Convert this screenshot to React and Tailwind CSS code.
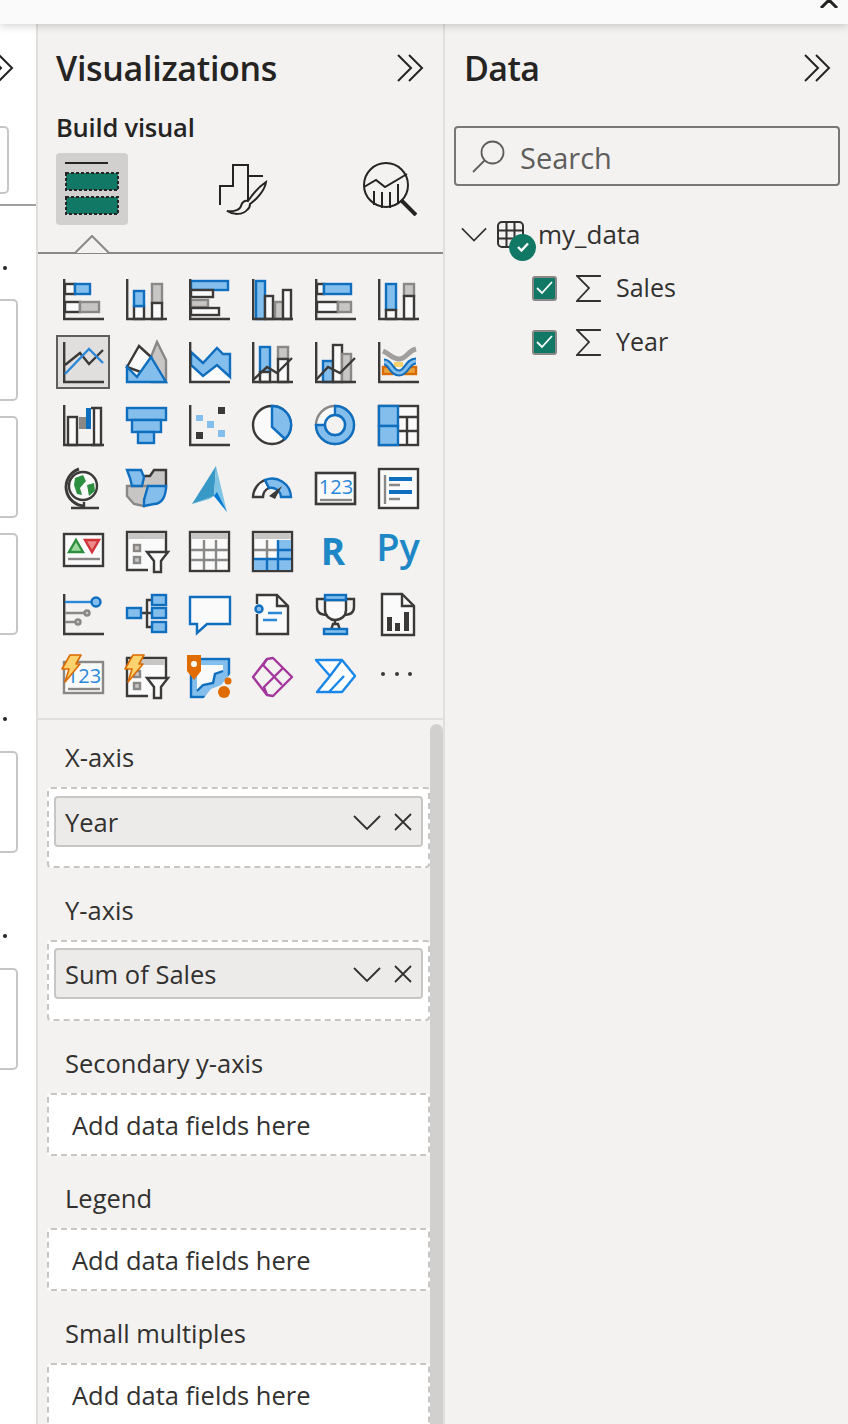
import React from 'react';

const DK = '#3b3a39';
const BL = '#106ebe';
const LB = '#83beec';
const GR = '#8a8886';
const LG = '#c8c6c4';
const WH = '#fafafa';
const SW = 2.4;

const Axis = () => <path d="M1.2 0V40H41" fill="none" stroke={DK} strokeWidth="2.4" />;
const Blue = (p) => <rect fill={LB} stroke={BL} strokeWidth={SW} {...p} />;
const White = (p) => <rect fill={WH} stroke={DK} strokeWidth={SW} {...p} />;
const Gray = (p) => <rect fill={LG} stroke={GR} strokeWidth={SW} {...p} />;
const Line = ({ d, c = DK, w = SW }) => <path d={d} fill="none" stroke={c} strokeWidth={w} />;

const Bolt = () => (
  <path d="M7 -2H18L13 7H17L2 25L6 12H-1Z" fill="#fcd26f" stroke="#d96b00" strokeWidth="1.6" strokeLinejoin="round" />
);

const CardBody = () => (
  <>
    <rect x="1" y="5" width="39" height="31" fill={WH} stroke={GR} strokeWidth={SW} />
    <text x="21" y="26" textAnchor="middle" fontFamily="'Open Sans', sans-serif" fontSize="20" fill="#2b88d8">123</text>
    <path d="M5 32H37" stroke={GR} strokeWidth={SW} />
  </>
);

const SlicerBody = () => (
  <>
    <path d="M22 39H1V1H40V20" fill={WH} stroke={DK} strokeWidth={SW} />
    <rect x="2" y="2" width="37" height="6" fill={LG} />
    <rect x="8" y="14" width="6" height="6" fill={LG} stroke={GR} strokeWidth={SW} />
    <rect x="8" y="26" width="6" height="6" fill={LG} stroke={GR} strokeWidth={SW} />
    <path d="M21 21H42L35 30V41H28V30Z" fill={WH} stroke={DK} strokeWidth={SW} />
  </>
);

const ICONS = [
  <><White x="2" y="5" width="10" height="10" /><Blue x="12" y="5" width="15" height="10" /><White x="2" y="23" width="15" height="10" /><Gray x="17" y="23" width="19" height="10" /><Axis /></>,
  <><White x="8" y="27" width="10" height="13" /><Blue x="8" y="12" width="10" height="15" /><Gray x="26" y="5" width="10" height="19" /><White x="26" y="24" width="10" height="16" /><Axis /></>,
  <><Blue x="2" y="2" width="37" height="9" /><White x="2" y="11" width="22" height="7" /><Gray x="2" y="21" width="17" height="7" /><White x="2" y="29" width="28" height="7" /><Axis /></>,
  <><Blue x="4" y="2" width="9" height="38" /><White x="13" y="17" width="8" height="23" /><Gray x="23" y="23" width="8" height="17" /><White x="31" y="11" width="8" height="29" /><Axis /></>,
  <><White x="2" y="5" width="7" height="10" /><Blue x="9" y="5" width="27" height="10" /><White x="2" y="23" width="21" height="10" /><Gray x="23" y="23" width="13" height="10" /><Axis /></>,
  <><Blue x="8" y="5" width="10" height="26" /><White x="8" y="31" width="10" height="9" /><Gray x="26" y="5" width="10" height="12" /><White x="26" y="17" width="10" height="23" /><Axis /></>,

  <><Axis /><Line d="M2 23L17 11L26 22L40 8" /><Line d="M2 32L26 7L40 21" c="#2b88d8" /></>,
  <><path d="M25 15L31 0L40 18V40H26Z" fill={LG} stroke={GR} strokeWidth={SW} /><path d="M1 25L13 4L25 15L20 32Z" fill={WH} stroke={DK} strokeWidth={SW} /><path d="M1 25L11 35L25 15L40 40H1Z" fill={LB} stroke={BL} strokeWidth={SW} /></>,
  <><path d="M2 23L14 34L28 23L41 35V40H2Z" fill={WH} /><path d="M2 10L14 21L28 6L34 12H41V35L28 23L14 34L2 23Z" fill={LB} stroke={BL} strokeWidth={SW} /><Axis /></>,
  <><Blue x="8" y="5" width="10" height="25" /><White x="8" y="30" width="10" height="10" /><Gray x="26" y="5" width="10" height="12" /><White x="26" y="17" width="10" height="23" /><Axis /><Line d="M1 38L15 25L25 31L40 16" /></>,
  <><Blue x="8" y="19" width="10" height="21" /><White x="18" y="3" width="9" height="37" /><Gray x="27" y="12" width="9" height="28" /><Axis /><Line d="M1 38L13 25L25 31L40 16" /></>,
  <><Axis /><Line d="M5 9C12 12 14 17 21 17C28 17 30 9 38 7" c="#a19f9d" w="5" /><rect x="5" y="25" width="9" height="7" fill="#e8a33d" stroke="#d96b00" strokeWidth={SW} /><rect x="27" y="25" width="11" height="7" fill="#e8a33d" stroke="#d96b00" strokeWidth={SW} /><rect x="16" y="20" width="9" height="5" fill="#fcd26f" /><Line d="M6 20C13 20 13 31 21 31C29 31 29 19 38 19" c={BL} w="7" /><Line d="M6 20C13 20 13 31 21 31C29 31 29 19 38 19" c={LB} w="3" /></>,

  <><White x="5" y="12" width="9" height="28" /><rect x="16" y="12" width="7" height="12" fill={GR} /><rect x="23" y="3" width="5" height="21" fill={BL} /><path d="M28 3H38V40H28" fill={WH} stroke={DK} strokeWidth={SW} /><path d="M31 3V40" stroke={DK} strokeWidth={SW} /><Axis /></>,
  <><Blue x="1" y="3" width="39" height="12" /><Blue x="6" y="15" width="29" height="12" /><Blue x="12" y="27" width="16" height="11" /></>,
  <><Axis /><rect x="7" y="10" width="7" height="6" fill={LB} /><rect x="29" y="2" width="7" height="7" fill={DK} /><rect x="18" y="16" width="7" height="7" fill={LB} /><rect x="29" y="25" width="7" height="7" fill={LB} /><rect x="7" y="27" width="7" height="7" fill={DK} /></>,
  <><circle cx="20" cy="20" r="19" fill={WH} stroke={DK} strokeWidth={SW} /><path d="M20 1A19 19 0 0 1 33 34L20 22Z" fill={LB} stroke={BL} strokeWidth={SW} /></>,
  <><circle cx="20" cy="20" r="19" fill={WH} stroke={GR} strokeWidth={SW} /><path d="M20 1A19 19 0 1 1 1 20H10A10 10 0 1 0 20 10Z" fill={LB} stroke={BL} strokeWidth={SW} /><circle cx="20" cy="20" r="10" fill="#f3f2f1" stroke={BL} strokeWidth={SW} /></>,
  <><rect x="1" y="1" width="39" height="39" fill={WH} stroke={DK} strokeWidth={SW} /><Line d="M20 12H40M29 12V40M20 26H40" /><Blue x="1" y="1" width="19" height="20" /><Blue x="1" y="21" width="19" height="19" /></>,

  <><circle cx="20" cy="18" r="14" fill={WH} stroke={DK} strokeWidth={SW} /><path d="M12 10L20 7L23 13L17 20L19 27L14 26L11 17Z" fill="#2d8f3f" /><path d="M24 17L31 15L32 23L26 28Z" fill="#2d8f3f" /><path d="M16 1A19 19 0 0 0 22 38" fill="none" stroke={DK} strokeWidth="3" /><path d="M8 40H36M21 34V40" stroke={DK} strokeWidth={SW} /></>,
  <><path d="M15 8H24L28 2H40V20H15Z" fill={LG} stroke={DK} strokeWidth={SW} /><path d="M1 18H22L18 38L8 36L1 28Z" fill={LG} stroke={GR} strokeWidth={SW} /><path d="M1 2H15L18 9L16 18H6L4 10Z" fill={LB} stroke={BL} strokeWidth={SW} /><path d="M22 18H40C40 28 36 36 28 36L18 38L18 32Z" fill={LB} stroke={BL} strokeWidth={SW} /></>,
  <><path d="M27 -2L3 36L25 28Z" fill="#3999c6" /><path d="M27 -2L38 44L25 28Z" fill="#7fc4e3" /><path d="M25 28L38 44L28 24Z" fill="#0078d4" /><path d="M3 36L25 28L20 31Z" fill="#59b4d9" /></>,
  <><path d="M1 29A19 19 0 0 1 13 12L17 20A10 10 0 0 0 11 29Z" fill={WH} stroke={DK} strokeWidth={SW} /><path d="M13 12A19 19 0 0 1 39 29H29A10 10 0 0 0 17 20Z" fill={LB} stroke={BL} strokeWidth={SW} /><path d="M17 28L30 18L23 31Z" fill={DK} /></>,
  <><CardBody /><rect x="1" y="5" width="39" height="31" fill="none" stroke={DK} strokeWidth={SW} /></>,
  <><rect x="1" y="1" width="39" height="39" fill={WH} stroke={DK} strokeWidth={SW} /><path d="M7 7V36" stroke={GR} strokeWidth={SW} /><path d="M11 11H34M11 24H34" stroke={BL} strokeWidth="4" /><path d="M11 17H22M11 31H22" stroke={GR} strokeWidth={SW} /></>,

  <><rect x="1" y="3" width="39" height="32" fill={WH} stroke={DK} strokeWidth={SW} /><path d="M13 9L20 21H6Z" fill="#9fd89f" stroke="#2d8f3f" strokeWidth={SW} /><path d="M22 9H36L29 21Z" fill="#ee8a8a" stroke="#d13438" strokeWidth={SW} /><path d="M5 28H37" stroke={GR} strokeWidth={SW} /></>,
  <SlicerBody />,
  <><rect x="1" y="1" width="39" height="39" fill={WH} stroke={DK} strokeWidth={SW} /><rect x="2" y="2" width="37" height="6" fill={LG} /><path d="M15 9V39M27 9V39M2 19H39M2 29H39" stroke={GR} strokeWidth={SW} /></>,
  <><rect x="1" y="1" width="39" height="39" fill={WH} stroke={DK} strokeWidth={SW} /><rect x="2" y="2" width="37" height="6" fill={LG} /><rect x="26" y="9" width="13" height="30" fill={LB} /><rect x="2" y="28" width="37" height="11" fill={LB} /><path d="M15 9V28M2 19H26" stroke={GR} strokeWidth={SW} /><path d="M15 28V39M26 9V39M2 28H39M26 19H39" stroke={BL} strokeWidth={SW} /></>,
  <text x="18" y="34" textAnchor="middle" fontFamily="'Open Sans', sans-serif" fontWeight="700" fontSize="37" fill="#1e88c7">R</text>,
  <text x="20" y="30" textAnchor="middle" fontFamily="'Open Sans', sans-serif" fontWeight="600" fontSize="38" fill="#1e88c7">Py</text>,

  <><Axis /><path d="M2 8H28" stroke="#2b88d8" strokeWidth={SW} /><circle cx="33" cy="8" r="4.5" fill={LB} stroke={BL} strokeWidth={SW} /><path d="M2 19H21M2 28H12" stroke={GR} strokeWidth={SW} /><circle cx="24" cy="19" r="2.5" fill={LG} stroke={GR} strokeWidth={SW} /><circle cx="15" cy="28" r="2.5" fill={LG} stroke={GR} strokeWidth={SW} /></>,
  <><Line d="M15 19H26M26 6H21V33H26" /><Blue x="1" y="14" width="14" height="10" /><Blue x="26" y="1" width="14" height="10" /><Blue x="26" y="14" width="14" height="10" /><Blue x="26" y="28" width="14" height="10" /></>,
  <path d="M1 3H41V30H18L8 39V30H1Z" fill={WH} stroke={BL} strokeWidth={SW} />,
  <><path d="M5 10V1H25L36 12V40H5V20" fill={WH} stroke={DK} strokeWidth={SW} /><path d="M25 1V12H36" fill="none" stroke={DK} strokeWidth={SW} /><circle cx="7" cy="15" r="3.5" fill={LB} stroke={BL} strokeWidth={SW} /><path d="M16 19H30M11 26H25" stroke="#2b88d8" strokeWidth={SW} /></>,
  <><path d="M10 5H2V13C2 19 6 21 12 21M31 5H39V13C39 19 35 21 29 21" fill="none" stroke={DK} strokeWidth={SW} /><path d="M10 6H31V16C31 22 26 26 20 26C15 26 10 22 10 16Z" fill={WH} stroke={DK} strokeWidth={SW} /><path d="M20 26V30M16 36L18 30H23L25 36" fill="none" stroke={DK} strokeWidth={SW} /><Blue x="10" y="1" width="21" height="5" /><Blue x="9" y="35" width="23" height="5" /></>,
  <><path d="M4 0H24L36 12V41H4Z" fill={WH} stroke={DK} strokeWidth={SW} /><path d="M24 0V12H36" fill="none" stroke={DK} strokeWidth={SW} /><rect x="9" y="23" width="5" height="14" fill={DK} /><rect x="17" y="29" width="5" height="8" fill={DK} /><rect x="26" y="18" width="5" height="19" fill={DK} /></>,

  <><CardBody /><Bolt /></>,
  <><SlicerBody /><Bolt /></>,
  <><rect x="2" y="2" width="38" height="38" fill={LB} stroke={BL} strokeWidth={SW} /><path d="M8 8H34V14L26 17L24 26L14 28L8 34Z" fill={WH} /><path d="M34 14L26 17L24 26L14 28L8 34" fill="none" stroke={BL} strokeWidth={SW} /><path d="M42 16V42H14L22 32L32 28Z" fill="#f3f2f1" /><path d="M-2 -2H12V14L5 23L-2 14Z" fill="#e06c00" /><circle cx="5" cy="7" r="3" fill="#fff" /><circle cx="35" cy="35" r="6" fill="#e06c00" /><circle cx="39" cy="24" r="3.5" fill="#e06c00" /></>,
  <g fill="none" stroke="#a4379c" strokeWidth="2.4" strokeLinejoin="round"><path d="M1 20L15 2L21 1L40 20L21 39L15 38Z" /><path d="M15 2L11 8L30 28M31 11L12 30L15 38" /></g>,
  <g fill="#fff" stroke="#1a86e8" strokeWidth="2.4" strokeLinejoin="round"><path d="M1 3H27L40 19L27 35H2L15 19Z" /><path d="M27 3L15 19M14 35L29 19" fill="none" /></g>,
  <g fill={DK}><circle cx="5" cy="17" r="2" /><circle cx="19" cy="17" r="2" /><circle cx="32" cy="17" r="2" /></g>,
];

const Chevrons = () => (
  <svg width="30" height="30" viewBox="0 0 30 30" fill="none" stroke="#252423" strokeWidth="2">
    <path d="M2 2L15 15L2 28M13 2L26 15L13 28" />
  </svg>
);

const Chevron = ({ w = 28 }) => (
  <svg width={w} height="16" viewBox="0 0 28 16" fill="none" stroke="#323130" strokeWidth="1.8">
    <path d="M1 2L14 15L27 2" />
  </svg>
);

const Close = () => (
  <svg width="20" height="20" viewBox="0 0 20 20" fill="none" stroke="#323130" strokeWidth="1.8">
    <path d="M2 2L18 18M18 2L2 18" />
  </svg>
);

function Field({ name, className }) {
  return (
    <div className={`mx-[5px] h-[51px] flex items-center pl-[9px] pr-[8px] bg-[#edebe9] border-2 border-[#c8c6c4] rounded-[4px] ${className}`}>
      <span className="flex-1 text-[25.5px] text-[#323130] pt-[1px]">{name}</span>
      <Chevron />
      <span className="ml-[12px]"><Close /></span>
    </div>
  );
}

function Well({ label, className, children }) {
  return (
    <div className="mb-[14px]">
      <div className="h-[58px] flex items-center pb-[2px] pl-[27px] text-[25.5px] text-[#323130]">{label}</div>
      <div className={`ml-[9px] w-[383px] bg-white border-2 border-dashed border-[#c8c6c4] rounded-[4px] ${className}`}>
        {children || (
          <div className="h-full flex items-center pl-[23px] pt-[1px] text-[25.5px] text-[#323130]">Add data fields here</div>
        )}
      </div>
    </div>
  );
}

function SideBox({ className }) {
  return <div className={`w-[18px] border-y-2 border-r-2 border-[#c8c6c4] rounded-r-[5px] ${className}`} />;
}

function Dot({ className }) {
  return <div className={`ml-[3px] w-[4px] h-[4px] rounded-full bg-[#252423] ${className}`} />;
}

function LeftStub() {
  return (
    <div className="w-[36px] shrink-0 bg-white overflow-hidden relative">
      <div className="h-[88px] flex items-center -ml-[14px]"><Chevrons /></div>
      <div className="mt-[14px] w-[9px] h-[68px] border-y-2 border-r-2 border-[#c8c6c4] rounded-r-[5px]" />
      <div className="mt-[10px] h-[2px] bg-[#a19f9d]" />
      <Dot className="mt-[60px]" />
      <SideBox className="mt-[29px] h-[102px]" />
      <SideBox className="mt-[15px] h-[102px]" />
      <SideBox className="mt-[15px] h-[102px]" />
      <Dot className="mt-[82px]" />
      <SideBox className="mt-[30px] h-[102px]" />
      <Dot className="mt-[81px]" />
      <SideBox className="mt-[30px] h-[102px]" />
    </div>
  );
}

function BuildTabs() {
  return (
    <div className="relative h-[101px] mt-[9px] border-b-2 border-[#8a8886] flex">
      <div className="ml-[18px] w-[72px] h-[72px] rounded-[4px] bg-[#d2d0ce] flex items-center justify-center">
        <svg width="54" height="54" viewBox="0 0 54 54">
          <path d="M0 1H43" stroke="#252423" strokeWidth="2" />
          <rect x="1" y="11" width="52" height="17" fill="#117865" stroke="#252423" strokeWidth="2" strokeDasharray="3 2" />
          <rect x="1" y="35" width="52" height="17" fill="#117865" stroke="#252423" strokeWidth="2" strokeDasharray="3 2" />
        </svg>
      </div>
      <div className="ml-[91px] mt-[11px]">
        <svg width="50" height="52" viewBox="0 0 50 52" fill="none" stroke="#252423" strokeWidth="2">
          <path d="M1 41V22H14V1H29V36M29 12H44" />
          <path d="M47 18C41 22 33 31 29 37C26 36 23 38 22 42C21 46 14 48 8 47C14 51 24 51 28 46C31 44 31 41 31 40C38 35 46 26 47 18Z" fill="#f3f2f1" />
        </svg>
      </div>
      <div className="ml-[94px] mt-[9px]">
        <svg width="54" height="54" viewBox="0 0 54 54" fill="none" stroke="#252423" strokeWidth="2">
          <circle cx="23" cy="23" r="22" />
          <path d="M1 25L13 18L22 25L44 12M11 29V43M19 30V46M27 30V46M35 22V41" />
          <path d="M38 38L53 53" strokeWidth="4" />
        </svg>
      </div>
      {/* caret over the tab underline */}
      <svg className="absolute left-[36px] -bottom-[2px]" width="36" height="19" viewBox="0 0 36 19" fill="none">
        <path d="M0 18H1L18 1L35 18H36" fill="#f3f2f1" stroke="#8a8886" strokeWidth="2" />
      </svg>
    </div>
  );
}

function Visualizations() {
  return (
    <div className="w-[405px] shrink-0 relative overflow-hidden border-l-2 border-[#e1dfdd] box-content">
      <div className="h-[88px] flex items-center justify-between pl-[18px] pr-[17px]">
        <span className="text-[34px] font-semibold text-[#252423] tracking-[-0.3px]">Visualizations</span>
        <Chevrons />
      </div>
      <div className="h-[32px] flex items-center pl-[18px] pb-[2px] text-[25.5px] font-semibold text-[#252423] tracking-[-0.2px]">Build visual</div>
      <BuildTabs />
      <div className="pt-[25px] pb-[19px] pl-[25px] grid grid-cols-[repeat(6,42px)] gap-[21px] border-b-2 border-[#e1dfdd]">
        {ICONS.map((icon, i) => (
          <div key={i} className={i === 6 ? 'w-[42px] h-[42px] bg-[#e1dfdd] shadow-[-1px_-1px_0_4px_#e1dfdd,-1px_-1px_0_6px_#605e5c]' : 'w-[42px] h-[42px]'}>
            <svg width="42" height="42" viewBox="0 0 42 42" className="overflow-visible">{icon}</svg>
          </div>
        ))}
      </div>
      <div className="pt-[9px]">
        <Well label="X-axis" className="h-[81px]"><Field name="Year" className="mt-[7px]" /></Well>
        <Well label="Y-axis" className="h-[81px]"><Field name="Sum of Sales" className="mt-[6px]" /></Well>
        <Well label="Secondary y-axis" className="h-[63px]" />
        <Well label="Legend" className="h-[63px]" />
        <Well label="Small multiples" className="h-[63px]" />
      </div>
      {/* scrollbar thumb */}
      <div className="absolute top-[700px] left-[392px] bottom-0 w-[13px] rounded-t-full bg-[#d2d0ce]" />
    </div>
  );
}

function TreeRow({ name }) {
  return (
    <div className="h-[54px] flex items-center pl-[87px]">
      <div className="w-[25px] h-[25px] rounded-[3px] bg-[#117865] border-2 border-[#8a8886] flex items-center justify-center">
        <svg width="17" height="14" viewBox="0 0 17 14" fill="none" stroke="#fff" strokeWidth="1.8"><path d="M1 7L6 12L16 1" /></svg>
      </div>
      <svg className="ml-[19px]" width="25" height="27" viewBox="0 0 25 27" fill="none" stroke="#323130" strokeWidth="1.8">
        <path d="M24 2V1H1L13 13L1 26H24V25" />
      </svg>
      <span className="ml-[15px] text-[25px] text-[#323130]">{name}</span>
    </div>
  );
}

function DataPanel() {
  return (
    <div className="flex-1 border-l-2 border-[#e1dfdd]">
      <div className="h-[88px] flex items-center justify-between pl-[19px] pr-[15px]">
        <span className="text-[34px] font-semibold text-[#252423] tracking-[-0.6px]">Data</span>
        <Chevrons />
      </div>
      <div className="mt-[14px] ml-[9px] w-[386px] h-[60px] border-2 border-[#797775] rounded-[4px] flex items-center pl-[16px]">
        <svg width="33" height="33" viewBox="0 0 33 33" fill="none" stroke="#605e5c" strokeWidth="1.8">
          <circle cx="20.5" cy="12.5" r="11" /><path d="M12.5 20.5L1 32" />
        </svg>
        <span className="ml-[15px] pt-[3px] text-[29px] text-[#605e5c]">Search</span>
      </div>
      <div className="mt-[28px] h-[40px] flex items-center pl-[16px] relative">
        <Chevron w={26} />
        <span className="ml-[10px] relative">
          <svg width="27" height="27" viewBox="0 0 27 27" fill="none" stroke="#323130" strokeWidth="2">
            <rect x="1" y="1" width="25" height="25" rx="4" /><path d="M9.5 1V26M17.5 1V26M1 9.5H26M1 17.5H26" />
          </svg>
          <span className="absolute left-[12px] top-[13px] w-[27px] h-[27px] rounded-full bg-[#117865] flex items-center justify-center">
            <svg width="12" height="10" viewBox="0 0 12 10" fill="none" stroke="#fff" strokeWidth="2.4"><path d="M1 5L4.5 8.5L11 1.5" /></svg>
          </span>
        </span>
        <span className="ml-[14px] text-[26px] text-[#323130]">my_data</span>
      </div>
      <div className="mt-[7px]">
        <TreeRow name="Sales" />
        <TreeRow name="Year" />
      </div>
    </div>
  );
}

export default function App() {
  return (
    <div className="w-[848px] h-[1424px] overflow-hidden flex flex-col bg-[#f3f2f1] font-['Open_Sans',sans-serif]">
      <div className="h-[24px] shrink-0 relative z-10 bg-[#fafafa] shadow-[0_2px_8px_rgba(0,0,0,0.18)] overflow-hidden flex justify-end pr-[9px]">
        <svg className="-mt-[8px]" width="20" height="16" viewBox="0 0 20 16" fill="none" stroke="#252423" strokeWidth="3">
          <path d="M2 0L10 8L18 0M10 8L2 16M10 8L18 16" />
        </svg>
      </div>
      <div className="flex-1 flex min-h-0">
        <LeftStub />
        <Visualizations />
        <DataPanel />
      </div>
    </div>
  );
}
